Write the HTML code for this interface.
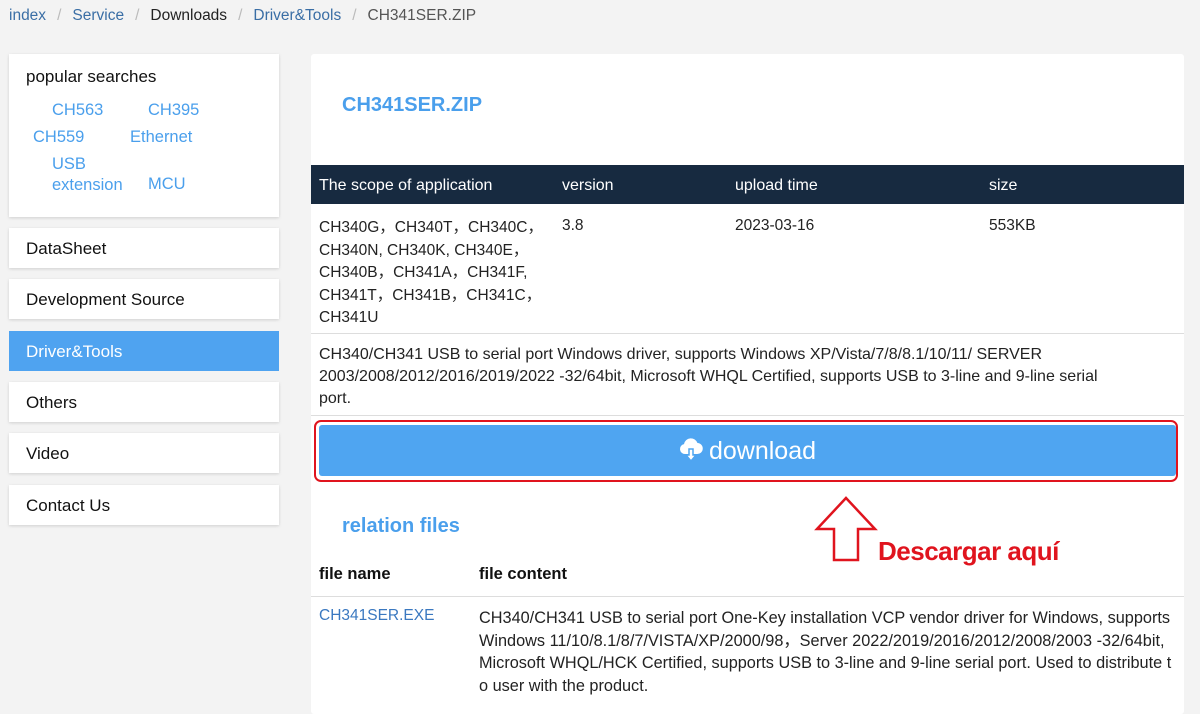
<!DOCTYPE html>
<html><head><meta charset="utf-8"><style>
body{margin:0;width:1200px;height:706px;overflow:hidden;background:#f3f3f3;font-family:"Liberation Sans",sans-serif;font-size:15.5px;color:#222;position:relative}
.a{position:absolute}
.bc{top:7px;left:9px;color:#3a6ea5;white-space:nowrap}
.bc span.s{color:#bbb;margin:0 11px}
.box{background:#fff;box-shadow:0 1px 3px rgba(0,0,0,.15)}
.blue{color:#4a9fec}
.menu{left:9px;width:270px;height:40px;line-height:42px;padding-left:17px;box-sizing:border-box;font-size:17px;color:#111}
.th{color:#fff;font-size:16px}
</style></head><body>
<div class="a bc">index<span class="s">/</span>Service<span class="s">/</span><span style="color:#222">Downloads</span><span class="s">/</span>Driver&amp;Tools<span class="s">/</span><span style="color:#555">CH341SER.ZIP</span></div>

<div class="a box" style="left:9px;top:54px;width:270px;height:163px">
<div class="a" style="left:17px;top:13px;font-size:17px;color:#111">popular searches</div>
<div class="a blue" style="left:43px;top:47px;font-size:16.5px">CH563</div>
<div class="a blue" style="left:139px;top:47px;font-size:16.5px">CH395</div>
<div class="a blue" style="left:24px;top:74px;font-size:16.5px">CH559</div>
<div class="a blue" style="left:121px;top:74px;font-size:16.5px">Ethernet</div>
<div class="a blue" style="left:43px;top:100px;font-size:16.5px;line-height:21px">USB<br>extension</div>
<div class="a blue" style="left:139px;top:121px;font-size:16.5px">MCU</div>
</div>
<div class="a box menu" style="top:228px">DataSheet</div>
<div class="a box menu" style="top:279px">Development Source</div>
<div class="a menu" style="top:331px;background:#4fa3f0;color:#fff">Driver&amp;Tools</div>
<div class="a box menu" style="top:382px">Others</div>
<div class="a box menu" style="top:433px">Video</div>
<div class="a box menu" style="top:485px">Contact Us</div>

<div class="a" style="left:311px;top:54px;width:873px;height:660px;background:#fff;border-radius:3px">
<div class="a blue" style="left:31px;top:40px;font-size:20px;font-weight:bold">CH341SER.ZIP</div>
<div class="a" style="left:0;top:111px;width:873px;height:39px;background:#172a40"></div>
<div class="a th" style="left:8px;top:123px">The scope of application</div>
<div class="a th" style="left:251px;top:123px">version</div>
<div class="a th" style="left:424px;top:123px">upload time</div>
<div class="a th" style="left:678px;top:123px">size</div>
<div class="a" style="left:8px;top:163px;width:230px;line-height:22.5px;font-size:15.5px">CH340G，CH340T，CH340C，CH340N, CH340K, CH340E，CH340B，CH341A，CH341F, CH341T，CH341B，CH341C，CH341U</div>
<div class="a" style="left:251px;top:163px">3.8</div>
<div class="a" style="left:424px;top:163px">2023-03-16</div>
<div class="a" style="left:678px;top:163px">553KB</div>
<div class="a" style="left:0;top:279px;width:873px;border-top:1px solid #ddd"></div>
<div class="a" style="left:8px;top:290px;width:800px;line-height:22px;font-size:16px">CH340/CH341 USB to serial port Windows driver, supports Windows XP/Vista/7/8/8.1/10/11/ SERVER 2003/2008/2012/2016/2019/2022 -32/64bit, Microsoft WHQL Certified, supports USB to 3-line and 9-line serial port.</div>
<div class="a" style="left:0;top:361px;width:873px;border-top:1px solid #ddd"></div>
<div class="a" style="left:8px;top:371px;width:857px;height:51px;background:#4fa5f1;border-radius:3px;color:#fff;font-size:25px;text-align:center;line-height:53px">
<svg width="24" height="26" viewBox="0 0 24 26" style="vertical-align:-4px;margin-right:6px"><path d="M6 17a5 5 0 0 1-1-9.9A7 7 0 0 1 18.5 6 5.5 5.5 0 0 1 18 17z" fill="#fff"/><path d="M10 12h4v6h3l-5 6-5-6h3z" fill="#fff" stroke="#4fa5f1" stroke-width="1.5"/></svg>download</div>
<div class="a" style="left:3px;top:366px;width:864px;height:62px;border:2px solid #e0141e;border-radius:7px;box-sizing:border-box"></div>
<div class="a blue" style="left:31px;top:461px;font-size:20px;font-weight:bold">relation files</div>
<svg class="a" style="left:503px;top:442px" width="64" height="66" viewBox="0 0 64 66"><path d="M32 2 61 33H44V64H20V33H3Z" fill="none" stroke="#e0141e" stroke-width="2.5"/></svg>
<div class="a" style="left:567px;top:482px;font-size:26px;font-weight:bold;color:#e0141e;letter-spacing:-0.5px">Descargar aquí</div>
<div class="a" style="left:8px;top:511px;font-size:16.5px;font-weight:bold;color:#111">file name</div>
<div class="a" style="left:168px;top:511px;font-size:16.5px;font-weight:bold;color:#111">file content</div>
<div class="a" style="left:0;top:542px;width:873px;border-top:1px solid #ddd"></div>
<div class="a" style="left:8px;top:553px;color:#3a78c0">CH341SER.EXE</div>
<div class="a" style="left:168px;top:553px;width:697px;line-height:22.5px;font-size:16.3px;word-break:break-all">CH340/CH341 USB to serial port One-Key installation VCP vendor driver for Windows, supports Windows 11/10/8.1/8/7/VISTA/XP/2000/98，Server 2022/2019/2016/2012/2008/2003 -32/64bit, Microsoft WHQL/HCK Certified, supports USB to 3-line and 9-line serial port. Used to distribute to user with the product.</div>
</div>
</body></html>
